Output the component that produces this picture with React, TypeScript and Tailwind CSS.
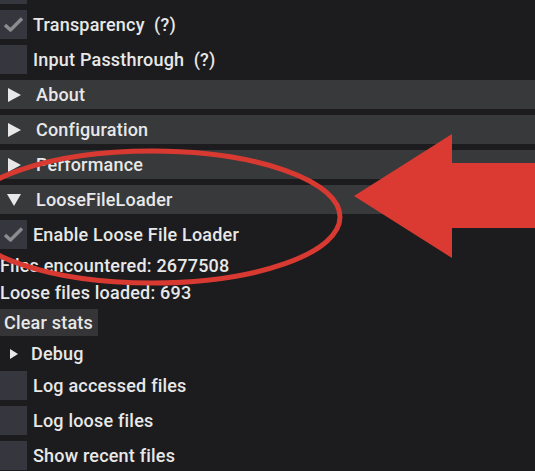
import React from 'react';

const font = { fontFamily: 'Roboto, "Noto Sans", sans-serif' };

// Checkbox row
const Check: React.FC<{ label: string; checked?: boolean }> = ({ label, checked }) => (
  <div className="flex h-[29px] shrink-0 items-center gap-[6px]">
    <div className="flex h-[29px] w-[27px] shrink-0 items-center justify-center bg-[#36363e]">
      {checked && (
        <svg width="21" height="17" viewBox="0 0 21 17">
          <path d="M2 9 L7.5 14 L19 2.5" fill="none" stroke="#8c8c90" strokeWidth="3.4" strokeLinejoin="round" />
        </svg>
      )}
    </div>
    <span className="whitespace-pre">{label}</span>
  </div>
);

// Collapsing header bar
const Header: React.FC<{ label: string; open?: boolean }> = ({ label, open }) => (
  <div className="flex h-[29px] shrink-0 items-center bg-[#38393b]">
    <div className="flex w-[36px] shrink-0 justify-center pr-[8px]">
      {open ? (
        <svg width="14" height="12" viewBox="0 0 14 12">
          <path d="M0 0 L14 0 L7 12 Z" fill="#e8e8e8" />
        </svg>
      ) : (
        <svg width="13" height="14" viewBox="0 0 13 14">
          <path d="M0 0 L13 7 L0 14 Z" fill="#e8e8e8" />
        </svg>
      )}
    </div>
    <span>{label}</span>
  </div>
);

export default function App() {
  return (
    <div
      className="relative h-[471px] w-[535px] overflow-hidden bg-[#1c1c1e] text-[18px] font-medium leading-none tracking-[0.2px] text-[#e8e8e8]"
      style={font}
    >
      <div className="mt-[-25px] flex flex-col gap-[6px]">
        <Check label="Show Overlay" />
        <Check label="Transparency  (?)" checked />
        <Check label="Input Passthrough  (?)" />
        <Header label="About" />
        <Header label="Configuration" />
        <Header label="Performance" />
        <Header label="LooseFileLoader" open />
        <Check label="Enable Loose File Loader" checked />
        <div className="flex h-[21px] shrink-0 items-center">Files encountered: 2677508</div>
        <div className="flex h-[21px] shrink-0 items-center">Loose files loaded: 693</div>
        <div className="flex h-[27px] w-[98px] shrink-0 items-center bg-[#353538] pl-[4px]">Clear stats</div>
        <div className="flex h-[23px] shrink-0 items-center">
          <div className="flex w-[31px] shrink-0 justify-center pr-[4px]">
            <svg width="8" height="10" viewBox="0 0 8 10">
              <path d="M0 0 L8 5 L0 10 Z" fill="#e8e8e8" />
            </svg>
          </div>
          <span>Debug</span>
        </div>
        <Check label="Log accessed files" />
        <Check label="Log loose files" />
        <Check label="Show recent files" />
      </div>

      {/* annotation overlay */}
      <svg className="pointer-events-none absolute left-0 top-0" width="535" height="471" viewBox="0 0 535 471">
        <ellipse cx="152" cy="217" rx="188" ry="66" fill="none" stroke="#d83a32" strokeWidth="5" />
        <path d="M354 196 L452 134 L452 163 L540 163 L540 228 L452 228 L452 258 Z" fill="#db3a32" />
      </svg>
    </div>
  );
}
